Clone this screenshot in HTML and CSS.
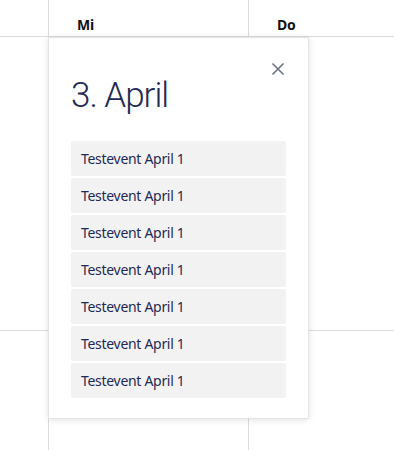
FILE: index.html
```html
<!DOCTYPE html>
<html lang="de">
<head>
    <meta charset="UTF-8">
    <meta name="viewport" content="width=device-width, initial-scale=1.0">
    <title>Kalender</title>
    <link rel="stylesheet" href="styles.css">
</head>
<body>
    <!-- Kalender-Raster -->
    <div class="calendar">
        <div class="cell head"></div>
        <div class="cell head col"><span class="day-name">Mi</span></div>
        <div class="cell head col"><span class="day-name">Do</span></div>

        <div class="cell week"></div>
        <div class="cell week col"></div>
        <div class="cell week col"></div>

        <div class="cell"></div>
        <div class="cell col"></div>
        <div class="cell col"></div>
    </div>

    <!-- Popover mit Terminen -->
    <div class="popover">
        <button class="close" aria-label="Schließen">
            <svg width="14" height="14" viewBox="0 0 14 14">
                <path d="M1.5 1.5 L12.5 12.5 M12.5 1.5 L1.5 12.5" stroke="#6b7287" stroke-width="1.6" fill="none"/>
            </svg>
        </button>
        <h2 class="popover-title">3. April</h2>
        <ul class="events">
            <li class="event">Testevent April 1</li>
            <li class="event">Testevent April 1</li>
            <li class="event">Testevent April 1</li>
            <li class="event">Testevent April 1</li>
            <li class="event">Testevent April 1</li>
            <li class="event">Testevent April 1</li>
            <li class="event">Testevent April 1</li>
        </ul>
    </div>
</body>
</html>
```

FILE: styles.css
```css
body {
    font-family: "Noto Sans", "Open Sans", sans-serif;
    background-color: #fff;
    color: #1f2a55;
    margin: 0;
    padding: 0;
    position: relative;
    height: 450px;
    overflow: hidden;
}
.calendar {
    display: grid;
    grid-template-columns: 48px 200px 1fr;
    grid-template-rows: 37px 294px 119px;
}
.cell {
    border-color: #dcdcdc;
    border-style: solid;
    border-width: 0;
}
.cell.col {
    border-left-width: 1px;
}
.cell.head,
.cell.week {
    border-bottom-width: 1px;
}
.cell.head {
    display: flex;
    align-items: flex-end;
}
.day-name {
    font-size: 14px;
    font-weight: 700;
    color: #111;
    padding-left: 28px;
    padding-bottom: 2px;
    letter-spacing: -0.2px;
}
.popover {
    position: absolute;
    top: 37px;
    left: 48px;
    width: 261px;
    box-sizing: border-box;
    padding: 34px 22px 20px 22px;
    background-color: #fff;
    border: 1px solid #e4e4e4;
    box-shadow: 0 1px 6px rgba(0, 0, 0, 0.12);
}
.close {
    position: absolute;
    top: 24px;
    right: 23px;
    background: none;
    border: none;
    padding: 0;
    cursor: pointer;
    line-height: 0;
}
.popover-title {
    font-family: Roboto, "Noto Sans", sans-serif;
    font-size: 35px;
    font-weight: 300;
    letter-spacing: -1px;
    margin: 0 0 21px 0;
    line-height: 48px;
    color: #1f2a55;
}
.events {
    list-style: none;
    margin: 0;
    padding: 0;
    display: flex;
    flex-direction: column;
    gap: 2px;
}
.event {
    background-color: #f2f2f2;
    border-radius: 2px;
    height: 35px;
    line-height: 35px;
    padding-left: 10px;
    font-size: 14px;
    letter-spacing: -0.3px;
    color: #1f2a55;
}
```
